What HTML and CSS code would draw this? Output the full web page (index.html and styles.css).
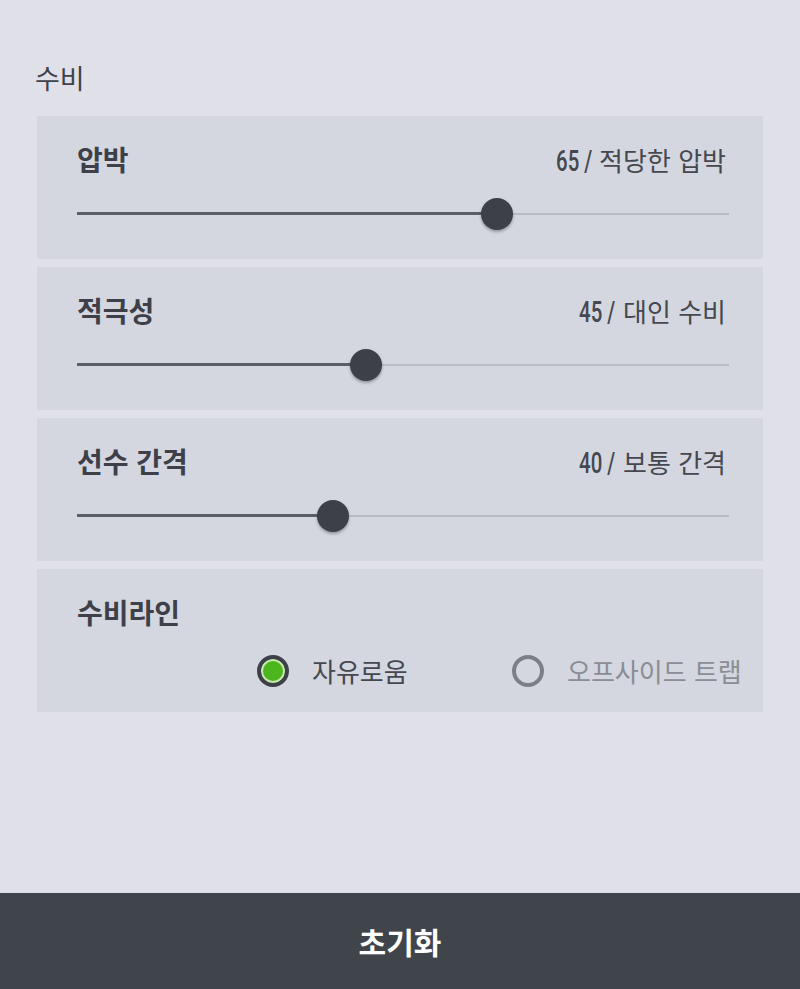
FILE: index.html
```html
<!DOCTYPE html>
<html lang="ko">
<head>
    <meta charset="UTF-8">
    <meta name="viewport" content="width=device-width, initial-scale=1.0">
    <title>수비 설정</title>
    <link rel="stylesheet" href="styles.css">
</head>
<body>
    <div class="page">
        <div class="content">
            <div class="section-title">수비</div>

            <div class="cards">
                <div class="card">
                    <div class="card-head">
                        <span class="card-title">압박</span>
                        <span class="card-value"><span class="num">65 /</span> 적당한 압박</span>
                    </div>
                    <div class="slider">
                        <div class="track"></div>
                        <div class="fill" style="width: 64.4%;"></div>
                        <div class="thumb" style="left: 64.4%;"></div>
                    </div>
                </div>

                <div class="card">
                    <div class="card-head">
                        <span class="card-title">적극성</span>
                        <span class="card-value"><span class="num">45 /</span> 대인 수비</span>
                    </div>
                    <div class="slider">
                        <div class="track"></div>
                        <div class="fill" style="width: 44.3%;"></div>
                        <div class="thumb" style="left: 44.3%;"></div>
                    </div>
                </div>

                <div class="card">
                    <div class="card-head">
                        <span class="card-title">선수 간격</span>
                        <span class="card-value"><span class="num">40 /</span> 보통 간격</span>
                    </div>
                    <div class="slider">
                        <div class="track"></div>
                        <div class="fill" style="width: 39.2%;"></div>
                        <div class="thumb" style="left: 39.2%;"></div>
                    </div>
                </div>

                <div class="card">
                    <div class="card-head">
                        <span class="card-title">수비라인</span>
                    </div>
                    <div class="options">
                        <label class="option selected">
                            <span class="radio"></span>
                            <span class="option-label">자유로움</span>
                        </label>
                        <label class="option">
                            <span class="radio"></span>
                            <span class="option-label">오프사이드 트랩</span>
                        </label>
                    </div>
                </div>
            </div>
        </div>

        <button class="reset">초기화</button>
    </div>
</body>
</html>
```
FILE: styles.css
```css
body {
    margin: 0;
    font-family: "Noto Sans CJK KR", "Noto Sans", sans-serif;
    background: #dfe0e8;
    color: #3d4048;
}
.page {
    min-height: 100vh;
    display: flex;
    flex-direction: column;
}
.content {
    flex: 1;
}
.section-title {
    font-size: 27px;
    line-height: 32px;
    padding: 62px 0 0 35px;
    color: #3f424a;
}
.cards {
    display: flex;
    flex-direction: column;
    gap: 8px;
    margin: 22px 37px 0 37px;
}
.card {
    background: #d4d7df;
    height: 143px;
    box-sizing: border-box;
    padding: 25px 34px 0 40px;
}
.card-head {
    display: flex;
    justify-content: space-between;
    align-items: center;
    height: 36px;
    padding-right: 3px;
    white-space: nowrap;
}
.card-title {
    font-size: 28px;
    font-weight: bold;
    color: #3d4048;
}
.card-value {
    font-size: 26px;
    color: #45484f;
}
.num {
    display: inline-block;
    font-family: Roboto, "Liberation Sans", sans-serif;
    font-weight: 500;
    font-size: 30px;
    transform: scaleX(0.68);
    transform-origin: right center;
    margin-left: -16px;
}
.slider {
    position: relative;
    height: 32px;
    margin-top: 21px;
}
.track {
    position: absolute;
    left: 0;
    right: 0;
    top: 15px;
    height: 2px;
    background: #b9bcc4;
}
.fill {
    position: absolute;
    left: 0;
    top: 14px;
    height: 3px;
    background: #5b5e65;
}
.thumb {
    position: absolute;
    top: 0;
    width: 32px;
    height: 32px;
    margin-left: -16px;
    border-radius: 50%;
    background: #3d4048;
    box-shadow: 0 2px 3px rgba(0, 0, 0, 0.3);
}
.options {
    display: flex;
    margin: 22px 0 0 180px;
}
.option {
    display: flex;
    align-items: center;
    gap: 23px;
    width: 255px;
    flex-shrink: 0;
    white-space: nowrap;
    font-size: 26px;
    color: #8a8d94;
}
.option.selected {
    color: #45484f;
}
.radio {
    width: 32px;
    height: 32px;
    flex-shrink: 0;
    box-sizing: border-box;
    border-radius: 50%;
    border: 4px solid #7c7f86;
}
.option.selected .radio {
    border: 4px solid #3d4048;
    background: #4db51d;
    box-shadow: inset 0 0 0 2px #c9e6b4;
}
.reset {
    height: 96px;
    border: none;
    background: #40444b;
    color: #fff;
    font-family: "Noto Sans CJK KR", "Noto Sans", sans-serif;
    font-size: 30px;
    font-weight: bold;
    width: 100%;
}
```
